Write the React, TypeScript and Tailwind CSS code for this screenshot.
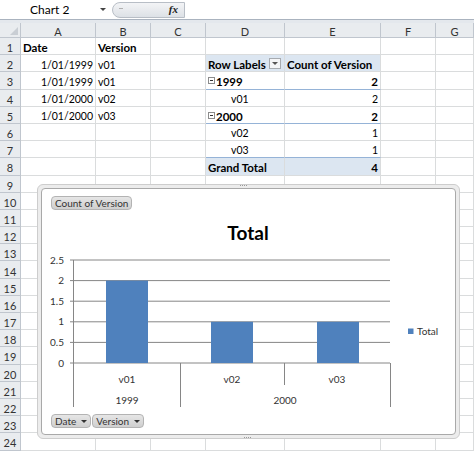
const COLS = ['A', 'B', 'C', 'D', 'E', 'F', 'G']
const ROWS = Array.from({ length: 24 }, (_, i) => i + 1)

const font = { fontFamily: 'Lato, "Liberation Sans", sans-serif' }

type Cell = {
  text?: string
  bold?: boolean
  right?: boolean
  indent?: boolean
  toggle?: boolean
  pivotHead?: boolean
  pivotTotal?: boolean
  lineBelow?: boolean
  filter?: boolean
}

const data: Record<string, Cell> = {
  A1: { text: 'Date', bold: true },
  B1: { text: 'Version', bold: true },
  A2: { text: '1/01/1999', right: true },
  B2: { text: 'v01' },
  A3: { text: '1/01/1999', right: true },
  B3: { text: 'v01' },
  A4: { text: '1/01/2000', right: true },
  B4: { text: 'v02' },
  A5: { text: '1/01/2000', right: true },
  B5: { text: 'v03' },
  D2: { text: 'Row Labels', bold: true, pivotHead: true, filter: true },
  E2: { text: 'Count of Version', bold: true, pivotHead: true },
  D3: { text: '1999', bold: true, toggle: true, lineBelow: true },
  E3: { text: '2', bold: true, right: true, lineBelow: true },
  D4: { text: 'v01', indent: true },
  E4: { text: '2', right: true },
  D5: { text: '2000', bold: true, toggle: true, lineBelow: true },
  E5: { text: '2', bold: true, right: true, lineBelow: true },
  D6: { text: 'v02', indent: true },
  E6: { text: '1', right: true },
  D7: { text: 'v03', indent: true, lineBelow: true },
  E7: { text: '1', right: true, lineBelow: true },
  D8: { text: 'Grand Total', bold: true, pivotTotal: true },
  E8: { text: '4', bold: true, right: true, pivotTotal: true },
}

const gridCols = 'grid grid-cols-[21px_75px_55px_55px_79px_96px_55px_1fr]'

const SheetCell = ({ id }: { id: string }) => {
  const c = data[id] || {}
  const bg = c.pivotHead || c.pivotTotal ? 'bg-[#dce6f1]' : 'bg-white'
  const bottom = c.lineBelow ? 'border-b-[#95b3d7]' : 'border-b-[#dadcdd]'
  return (
    <div
      className={`flex h-[17.2px] items-center overflow-visible whitespace-nowrap border-b border-r border-r-[#dadcdd] px-[2px] pt-[3px] leading-none text-black ${bg} ${bottom} ${
        c.right ? 'justify-end' : ''
      } ${c.bold ? 'text-[11.5px] font-bold' : 'text-[10.5px]'} ${c.indent ? 'pl-[25px]' : ''}`}
    >
      {c.toggle && (
        <span className="mr-[1px] mt-[-2px] flex h-[7px] w-[7px] items-center justify-center border border-[#8c8c8c] bg-white">
          <span className="h-[1px] w-[3px] bg-[#333]" />
        </span>
      )}
      {c.text}
      {c.filter && (
        <span className="ml-auto mr-[1px] mt-[-3px] flex h-[11px] w-[12px] items-center justify-center border border-[#a7abb0] bg-[#f4f5f7]">
          <span className="h-0 w-0 border-l-[3px] border-r-[3px] border-t-[3px] border-l-transparent border-r-transparent border-t-[#555]" />
        </span>
      )}
    </div>
  )
}

const Grip = ({ className }: { className: string }) => (
  <div className={`absolute flex gap-[1px] ${className}`}>
    {[0, 1, 2, 3].map((i) => (
      <span key={i} className="h-[1px] w-[1px] bg-[#9a9a9a]" />
    ))}
  </div>
)

const PivotButton = ({ label, arrow }: { label: string; arrow?: boolean }) => (
  <div className="flex h-[14px] items-center gap-[5px] rounded-[4px] border border-[#b3b3b3] bg-gradient-to-b from-[#e6e6e6] to-[#cfcfcf] px-[3px] text-[10px] leading-none text-[#333]">
    {label}
    {arrow && (
      <span className="h-0 w-0 border-l-[3px] border-r-[3px] border-t-[3px] border-l-transparent border-r-transparent border-t-[#333]" />
    )}
  </div>
)

const Chart = () => {
  const y = (v: number) => 364 - v * 41.2
  const bars = [
    { x: 106, v: 2 },
    { x: 211, v: 1 },
    { x: 317, v: 1 },
  ]
  return (
    <div className="absolute left-[37px] top-[161px] h-[255px] w-[423px] rounded-[6px] border border-[#cdcdcd] bg-[#ececec] p-[3px]">
      <Grip className="left-[202px] top-[0px]" />
      <Grip className="bottom-[0px] left-[206px]" />
      <div className="relative h-full w-full rounded-[4px] border border-[#a9a9a9] bg-white">
        <svg className="absolute inset-0" width="413" height="245" viewBox="42 190 413 245">
          <text x="248" y="241" textAnchor="middle" fontSize="19" fontWeight="700" fill="#000" style={font}>
            Total
          </text>
          {[0, 0.5, 1, 1.5, 2, 2.5].map((v) => (
            <g key={v}>
              <line x1="70" x2="390" y1={y(v)} y2={y(v)} stroke="#868686" strokeWidth="1" />
              <text x="64" y={y(v) + 3.5} textAnchor="end" fontSize="10" fill="#333" style={font}>
                {v}
              </text>
            </g>
          ))}
          {bars.map((b) => (
            <rect key={b.x} x={b.x} y={y(b.v)} width="42" height={364 - y(b.v)} fill="#4f81bd" />
          ))}
          <line x1="73.5" x2="73.5" y1="261" y2="408" stroke="#868686" />
          <line x1="180.5" x2="180.5" y1="364" y2="408" stroke="#868686" />
          <line x1="284.5" x2="284.5" y1="364" y2="386" stroke="#868686" />
          <line x1="390.5" x2="390.5" y1="364" y2="408" stroke="#868686" />
          {[
            { x: 127, t: 'v01' },
            { x: 232, t: 'v02' },
            { x: 337, t: 'v03' },
          ].map((l) => (
            <text key={l.t} x={l.x} y="384" textAnchor="middle" fontSize="10" fill="#333" style={font}>
              {l.t}
            </text>
          ))}
          <text x="127" y="405" textAnchor="middle" fontSize="10" fill="#333" style={font}>
            1999
          </text>
          <text x="285" y="405" textAnchor="middle" fontSize="10" fill="#333" style={font}>
            2000
          </text>
          <rect x="408" y="329.5" width="5.5" height="5.5" fill="#4f81bd" />
          <text x="417" y="335.5" fontSize="10" fill="#333" style={font}>
            Total
          </text>
        </svg>
        <div className="absolute left-[9px] top-[7px]">
          <PivotButton label="Count of Version" />
        </div>
        <div className="absolute left-[9px] top-[225px] flex gap-[1px]">
          <PivotButton label="Date" arrow />
          <PivotButton label="Version" arrow />
        </div>
      </div>
    </div>
  )
}

export default function App() {
  return (
    <div className="h-[452px] w-[474px] overflow-hidden bg-white" style={font}>
      {/* Formula bar */}
      <div className="flex h-[20px] items-center border-b border-[#aab3bf] bg-white">
        <div className="relative flex h-full w-[112px] items-center pl-[30px] text-[12px] text-black">
          Chart 2
          <span className="absolute right-[6px] top-[8px] h-0 w-0 border-l-[3px] border-r-[3px] border-t-[3px] border-l-transparent border-r-transparent border-t-[#444]" />
        </div>
        <div className="flex h-[16px] w-[73px] items-center justify-between rounded-l-full border border-[#b8bec6] bg-gradient-to-b from-[#f3f4f6] to-[#dde1e6] pl-[6px] pr-[6px]">
          <span className="h-[3px] w-[4px] border-t border-[#b0b0b0]" />
          <span className="text-[11px] font-bold italic text-[#222]" style={{ fontFamily: '"Liberation Serif", serif' }}>
            fx
          </span>
        </div>
        <div className="h-full flex-1 bg-white" />
      </div>
      <div className="h-[3px] bg-[#e4e8ed]" />

      <div className="relative">
        {/* Column headers */}
        <div className={`${gridCols} h-[15px]`}>
          <div className="relative border-b border-r border-[#c0c6ce] bg-[#e9ecef]">
            <span className="absolute bottom-[2px] right-[2px] h-0 w-0 border-b-[8px] border-l-[8px] border-b-[#c9ced4] border-l-transparent" />
          </div>
          {COLS.map((c) => (
            <div
              key={c}
              className="flex items-center justify-center border-b border-r border-[#c0c6ce] bg-[#e9ecef] pt-[2px] text-[11px] leading-none text-[#333]"
            >
              {c}
            </div>
          ))}
        </div>

        {/* Rows */}
        {ROWS.map((r) => (
          <div key={r} className={gridCols}>
            <div className="flex h-[17.2px] items-center justify-center border-b border-r border-[#c0c6ce] bg-[#e9ecef] pt-[3px] text-[11px] leading-none text-[#333]">
              {r}
            </div>
            {COLS.map((c) => (
              <SheetCell key={c} id={`${c}${r}`} />
            ))}
          </div>
        ))}

        <Chart />
      </div>
    </div>
  )
}
